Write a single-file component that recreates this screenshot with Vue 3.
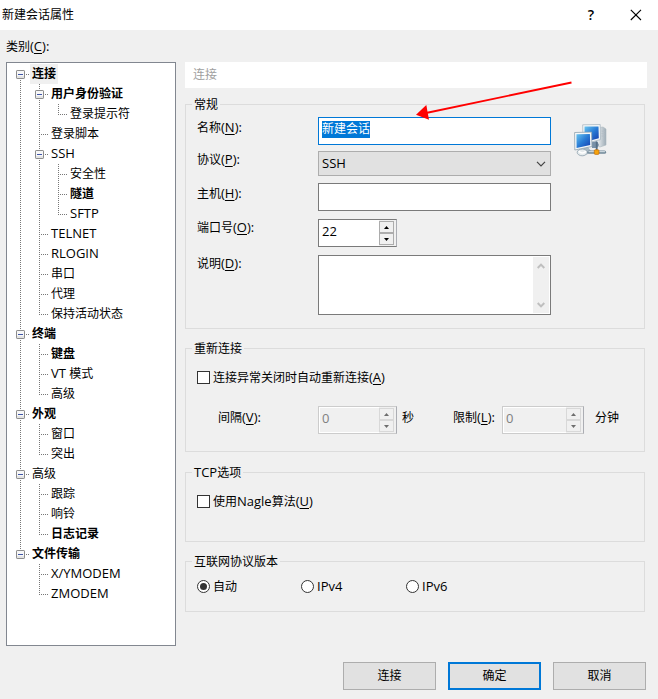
<script setup>
import { ref } from 'vue'

// g: guide cells, from the outermost level inwards
// l = line, t = tee, e = elbow, s = blank, f/b/z = expander (first / middle / last)
const tree = [
  { g: 'f', text: '连接', bold: true, selected: true },
  { g: 'lb', text: '用户身份验证', bold: true },
  { g: 'lle', text: '登录提示符' },
  { g: 'lt', text: '登录脚本' },
  { g: 'lb', text: 'SSH' },
  { g: 'llt', text: '安全性' },
  { g: 'llt', text: '隧道', bold: true },
  { g: 'lle', text: 'SFTP' },
  { g: 'lt', text: 'TELNET' },
  { g: 'lt', text: 'RLOGIN' },
  { g: 'lt', text: '串口' },
  { g: 'lt', text: '代理' },
  { g: 'le', text: '保持活动状态' },
  { g: 'b', text: '终端', bold: true },
  { g: 'lt', text: '键盘', bold: true },
  { g: 'lt', latin: 'VT ', text: '模式' },
  { g: 'le', text: '高级' },
  { g: 'b', text: '外观', bold: true },
  { g: 'lt', text: '窗口' },
  { g: 'le', text: '突出' },
  { g: 'b', text: '高级' },
  { g: 'lt', text: '跟踪' },
  { g: 'lt', text: '响铃' },
  { g: 'le', text: '日志记录', bold: true },
  { g: 'z', text: '文件传输', bold: true },
  { g: 'st', text: 'X/YMODEM' },
  { g: 'se', text: 'ZMODEM' },
]
const guides = {
  l: 'M9.5 0V20',
  t: 'M9.5 0V20M11 10.5H19',
  e: 'M9.5 0V11M11 10.5H19',
  s: '',
  f: 'M9.5 16V20M15 10.5H19',
  b: 'M9.5 0V6M9.5 16V20M15 10.5H19',
  z: 'M9.5 0V6M15 10.5H19',
}
const version = ref('自动')
const versions = ['自动', 'IPv4', 'IPv6']
</script>

<template>
  <div class="dialog">
    <header class="titlebar">
      <span class="title">新建会话属性</span>
      <span class="help">?</span>
      <svg class="close" width="12" height="12" viewBox="0 0 12 12"><path d="M.8 .8L11 11M11 .8L.8 11" stroke="#000" stroke-width="1.1" /></svg>
    </header>

    <div class="caption">类别<span class="latin">(<u>C</u>):</span></div>

    <main class="body">
      <div class="tree">
        <div v-for="(n, i) in tree" :key="i" class="node">
          <svg v-for="(c, j) in n.g" :key="j" width="19" height="20" viewBox="0 0 19 20">
            <path :d="guides[c]" fill="none" stroke="#777" stroke-dasharray="1 1" />
            <template v-if="'fbz'.includes(c)">
              <rect x="5.5" y="6.5" width="8" height="8" rx=".6" fill="#f7f7f7" stroke="#8c8c8c" />
              <path d="M6 12h7v2H6z" fill="#e4e4e4" />
              <path d="M7 10.5h5" stroke="#4056a8" />
            </template>
          </svg>
          <span class="text" :class="{ bold: n.bold, selected: n.selected, latin: /^[A-Z]/.test(n.text) }"><span v-if="n.latin" class="latin prefix">{{ n.latin }}</span>{{ n.text }}</span>
        </div>
      </div>

      <div class="pane">
        <div class="heading">连接</div>

        <section class="group general">
          <div class="legend">常规</div>
          <div class="columns">
            <div class="form">
              <label class="low">名称<span class="latin">(<u>N</u>):</span></label>
              <div class="input focus"><span class="selection">新建会话</span></div>
              <label>协议<span class="latin">(<u>P</u>):</span></label>
              <div class="select">
                <span class="latin">SSH</span>
                <svg width="10" height="6" viewBox="0 0 10 6"><path d="M1 .8L5 4.8L9 .8" fill="none" stroke="#444" stroke-width="1.2" /></svg>
              </div>
              <label class="low">主机<span class="latin">(<u>H</u>):</span></label>
              <div class="input"></div>
              <label>端口号<span class="latin">(<u>O</u>):</span></label>
              <div class="spinner">
                <span class="value">22</span>
                <span class="steps">
                  <i><svg width="5" height="3"><path d="M0 3L2.5 0L5 3z" /></svg></i>
                  <i><svg width="5" height="3"><path d="M0 0L2.5 3L5 0z" /></svg></i>
                </span>
              </div>
              <label>说明<span class="latin">(<u>D</u>):</span></label>
              <div class="textarea">
                <div class="scrollbar">
                  <svg width="8" height="6" viewBox="0 0 8 6"><path d="M.7 5L4 1.6L7.3 5" /></svg>
                  <svg width="8" height="6" viewBox="0 0 8 6"><path d="M.7 1L4 4.4L7.3 1" /></svg>
                </div>
              </div>
            </div>
            <svg class="network" width="34" height="34" viewBox="0 0 34 34">
              <defs>
                <linearGradient id="screen" x1="0" y1="0" x2="1" y2="1">
                  <stop offset="0" stop-color="#69c4ef" />
                  <stop offset=".5" stop-color="#287bd5" />
                  <stop offset="1" stop-color="#163fae" />
                </linearGradient>
                <linearGradient id="tower" x1="0" x2="1">
                  <stop offset="0" stop-color="#f8fafb" />
                  <stop offset="1" stop-color="#9eacb6" />
                </linearGradient>
              </defs>
              <path d="M25 3.5l4-.5 3 2v16L26 23l-4-2z" fill="url(#tower)" stroke="#acb8c0" stroke-width=".6" />
              <path d="M27.5 7l3 .5M27.5 9.5l3 .3M27.5 12h3" stroke="#b2bdc5" stroke-width=".8" />
              <path d="M18 18l5-1 2 4-2 3h-5z" fill="#7891a8" />
              <path d="M8.7 .8l17.5-.3.3 15-9 2.5-8.5-1z" fill="#f4f7f8" stroke="#a9b8c2" stroke-width=".8" />
              <path d="M10.5 2.6h14l.3 11.6-7.3 2-7-.5z" fill="url(#screen)" />
              <path d="M7 25l7-2 3 4-4 3.5-5-.5z" fill="#aab9c3" />
              <ellipse cx="8.2" cy="28.4" rx="5" ry="3.4" fill="#e6ebed" stroke="#8d9fac" stroke-width=".8" />
              <path d="M5 27c1 2.5 5 2.8 7 .3" fill="none" stroke="#fff" stroke-width="1.6" />
              <path d="M.6 8.5l17-.4.3 14.4L.8 26z" fill="#f5f8f9" stroke="#8fa2af" stroke-width=".8" />
              <path d="M2.4 10.2l13.5-.3.3 11.2L2.6 23.9z" fill="url(#screen)" />
              <path d="M15 28.2h15.5" stroke="#718899" stroke-width="3.2" stroke-linecap="round" />
              <path d="M15 27.7h15.5" stroke="#cad5dc" stroke-width="1.3" stroke-linecap="round" />
              <path d="M22.7 18v8" stroke="#577086" stroke-width="1.8" />
              <rect x="20.3" y="25.8" width="4.7" height="4.6" rx="1" fill="#f6a30b" stroke="#bd6b13" stroke-width=".7" />
            </svg>
          </div>
        </section>

        <section class="group reconnect">
          <div class="legend">重新连接</div>
          <div class="option"><span class="check"></span><span>连接异常关闭时自动重新连接<span class="latin">(<u>A</u>)</span></span></div>
          <div class="timing">
            <label class="interval">间隔<span class="latin">(<u>V</u>):</span></label>
            <div class="spinner disabled">
              <span class="value">0</span>
              <span class="steps">
                <i><svg width="5" height="3"><path d="M0 3L2.5 0L5 3z" /></svg></i>
                <i><svg width="5" height="3"><path d="M0 0L2.5 3L5 0z" /></svg></i>
              </span>
            </div>
            <span class="unit">秒</span>
            <label class="limit">限制<span class="latin">(<u>L</u>):</span></label>
            <div class="spinner disabled wide">
              <span class="value">0</span>
              <span class="steps">
                <i><svg width="5" height="3"><path d="M0 3L2.5 0L5 3z" /></svg></i>
                <i><svg width="5" height="3"><path d="M0 0L2.5 3L5 0z" /></svg></i>
              </span>
            </div>
            <span class="minutes">分钟</span>
          </div>
        </section>

        <section class="group tcp">
          <div class="legend"><span class="latin">TCP</span>选项</div>
          <div class="option"><span class="check"></span><span>使用<span class="latin">Nagle</span>算法<span class="latin">(<u>U</u>)</span></span></div>
        </section>

        <section class="group ip">
          <div class="legend">互联网协议版本</div>
          <div class="radios">
            <div v-for="v in versions" :key="v" class="option" @click="version = v">
              <span class="radio" :class="{ on: version === v }"></span><span :class="{ latin: v !== '自动' }">{{ v }}</span>
            </div>
          </div>
        </section>
      </div>
    </main>

    <footer class="buttons">
      <button>连接</button>
      <button class="default">确定</button>
      <button>取消</button>
    </footer>

    <svg class="arrow" width="160" height="42" viewBox="0 0 160 42">
      <path d="M10 33L155.5 2.5" stroke="#f00" stroke-width="1.9" />
      <path d="M0 34.7L10.3 25L13 39.8z" fill="#f00" />
    </svg>
  </div>
</template>

<style>
body { background: #f0f0f0; }
</style>

<style scoped>
* { box-sizing: border-box; }
.dialog {
  position: relative;
  width: 658px;
  height: 699px;
  overflow: hidden;
  background: #f0f0f0;
  color: #000;
  font: 12px/18px "Open Sans", "Noto Sans CJK SC", sans-serif;
  white-space: nowrap;
}
svg { display: block; flex: none; }
u { text-underline-offset: 2px; text-decoration-thickness: 1px; text-decoration-skip-ink: none; }
.latin { font-size: 13px; line-height: 1; }
.prefix { white-space: pre; }
.titlebar { display: flex; align-items: center; height: 30px; padding: 0 16px 0 2px; background: #fff; }
.title { flex: 1; }
.help { font-size: 14px; font-weight: 600; margin-right: 36px; }
.close { margin-top: -1px; }
.caption { height: 32px; padding: 8px 0 0 6px; }
.body { display: flex; gap: 9px; height: 584px; padding-left: 6px; }
.tree { width: 170px; height: 584px; padding: 1px 0 0 4px; border: 1px solid #828790; background: #fff; }
.node { display: flex; height: 20px; }
.node .text { height: 20px; padding: 0 2px; line-height: 19px; }
.bold { font-weight: 700; }
.selected { background: #f0f0f0; }
.pane { width: 462px; }
.heading { height: 26px; padding: 4px 8px; background: #fff; color: #a0a0a0; }
.group { width: 460px; border: 1px solid #dcdcdc; }
.legend { width: max-content; height: 18px; margin: -9px 0 0 6px; padding: 0 2px; background: #f0f0f0; }
.general { height: 225px; margin-top: 16px; }
.columns { display: flex; gap: 23px; padding: 3px 0 0 11px; }
.form { display: grid; grid-template-columns: 121px 233px; grid-template-rows: 34px 32px 36px 36px 60px; align-items: start; }
.low { padding-top: 2px; }
.input { height: 28px; padding: 3px; border: 1px solid #7a7a7a; background: #fff; }
.input.focus { border-color: #0078d7; }
.selection { display: block; width: max-content; height: 17px; line-height: 16px; background: #0078d7; color: #fff; }
.select { display: flex; align-items: center; justify-content: space-between; height: 25px; padding: 0 4px 0 3px; border: 1px solid #adadad; background: #e1e1e1; }
.spinner { display: flex; width: 79px; height: 28px; border: 1px solid #7a7a7a; border-right-color: #abadb3; background: #fff; }
.value { flex: 1; padding: 2px 3px; font-size: 13px; }
.steps { display: flex; flex-direction: column; width: 17px; padding: 1px 1px 1px 0; background: #f0f0f0; }
.steps i { display: flex; align-items: center; justify-content: center; width: 15px; height: 12px; border: 1px solid #acacac; background: #f0f0f0; }
.spinner.disabled { border-color: #ccc #abadb3 #ccc #ccc; background: #f0f0f0; box-shadow: inset 0 0 0 1px #fff; color: #808080; }
.disabled .steps i { border-color: #d8d8d8; }
.disabled path { fill: #6d6d6d; }
.spinner.wide { width: 82px; }
.textarea { display: flex; justify-content: flex-end; height: 60px; padding: 1px; border: 1px solid #7a7a7a; background: #fff; }
.scrollbar { display: flex; flex-direction: column; justify-content: space-between; width: 16px; padding: 6px 4px 5px; background: #f0f0f0; }
.scrollbar path { fill: none; stroke: #bfbfbf; stroke-width: 2; }
.network { margin-top: 7px; }
.reconnect { height: 104px; margin-top: 19px; }
.option { display: flex; align-items: center; gap: 3px; height: 17px; }
.group > .option { margin: 11px 0 0 11px; }
.check { width: 13px; height: 13px; border: 1px solid #333; background: #fff; }
.timing { display: flex; margin: 20px 0 0 32px; height: 28px; }
.timing > label, .unit, .minutes { padding-top: 3px; }
.interval { width: 100px; }
.unit { flex: 0 0 56px; padding-left: 5px; }
.limit { flex: 0 0 49px; }
.minutes { padding-left: 11px; }
.tcp { height: 70px; margin-top: 20px; }
.ip { height: 51px; margin-top: 19px; }
.radios { display: grid; grid-template-columns: 104px 105px 80px; padding: 7px 0 0 11px; }
.radio { display: grid; place-items: center; width: 13px; height: 13px; border: 1px solid #333; border-radius: 50%; background: #fff; }
.radio.on::after { content: ""; width: 7px; height: 7px; border-radius: 50%; background: #333; }
.buttons { display: flex; gap: 12px; padding: 16px 0 0 343px; }
button { width: 93px; height: 28px; padding: 0; border: 1px solid #adadad; background: #e1e1e1; color: #000; font: inherit; }
button.default { border: 2px solid #0078d7; }
.arrow { position: absolute; left: 416px; top: 80px; }
</style>
